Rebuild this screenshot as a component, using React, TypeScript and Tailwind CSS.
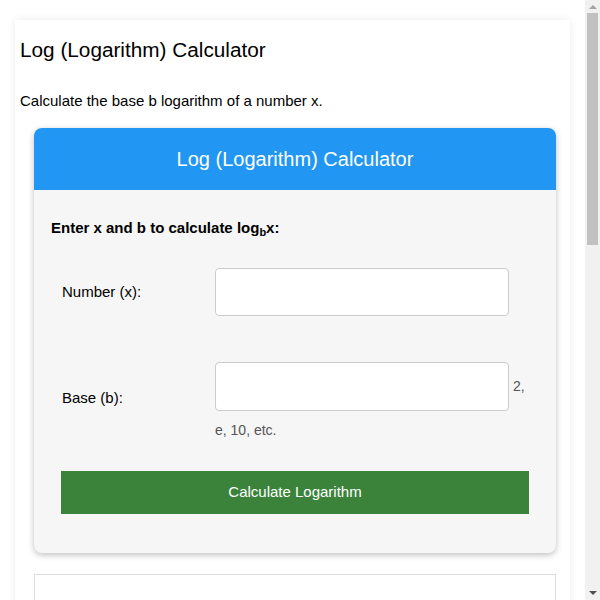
function Scrollbar() {
  return (
    <div className="sticky top-0 flex h-[600px] w-[15px] shrink-0 flex-col items-center bg-[#f1f1f1]">
      <div className="mt-[5px] h-0 w-0 border-x-[4px] border-b-[4px] border-x-transparent border-b-[#a3a3a3]" />
      <div className="mt-[4px] h-[232px] w-[11px] bg-[#c1c1c1]" />
      <div className="mt-auto mb-[5px] h-0 w-0 border-x-[4px] border-t-[4px] border-x-transparent border-t-[#505050]" />
    </div>
  );
}

export default function App() {
  return (
    <div className="flex bg-white font-['Liberation_Sans',Arial,sans-serif] text-black">
      <div className="min-h-[1480px] w-[585px] pt-5 pb-10">
        <div className="mx-[15px] bg-white px-[5px] pt-[18px] pb-10 shadow-[0_0_8px_rgba(0,0,0,0.08)]">
          <h1 className="text-[20.75px] leading-6 font-normal">Log (Logarithm) Calculator</h1>
          <p className="mt-[29px] text-[15px] leading-5">Calculate the base b logarithm of a number x.</p>

          <div className="ml-[14px] mt-[17px] w-[522px] overflow-hidden rounded-lg bg-[#f6f6f6] shadow-[0_2px_6px_rgba(0,0,0,0.25)]">
            <div className="flex h-[62px] items-center justify-center bg-[#2196f3] text-[20px] text-white">
              Log (Logarithm) Calculator
            </div>
            <div className="px-[17px] pt-[28px] pb-[39px]">
              <div className="text-[15px] font-bold leading-5">
                Enter x and b to calculate log<sub className="text-[11px]">b</sub>x:
              </div>

              <div className="mt-[30px] flex items-center">
                <div className="w-[164px] pl-[11px] text-[15px]">Number (x):</div>
                <input className="h-12 w-[294px] rounded border border-[#ccc] bg-white" />
              </div>

              <div className="mt-[46px] flex items-center">
                <div className="w-[164px] pb-[6px] pl-[11px] text-[15px]">Base (b):</div>
                <div>
                  <div className="flex items-center">
                    <input className="h-[49px] w-[294px] rounded border border-[#ccc] bg-white" />
                    <span className="ml-1 text-[14px] text-[#555]">2,</span>
                  </div>
                  <div className="mt-[9px] text-[14px] leading-5 text-[#555]">e, 10, etc.</div>
                </div>
              </div>

              <button className="ml-[10px] mt-[31px] h-[43px] w-[468px] bg-[#3b833b] text-[15px] text-white">
                Calculate Logarithm
              </button>
            </div>
          </div>

          <div className="ml-[14px] mt-[21px] h-[300px] w-[522px] border border-[#ddd] bg-white" />
        </div>
      </div>
      <Scrollbar />
    </div>
  );
}
